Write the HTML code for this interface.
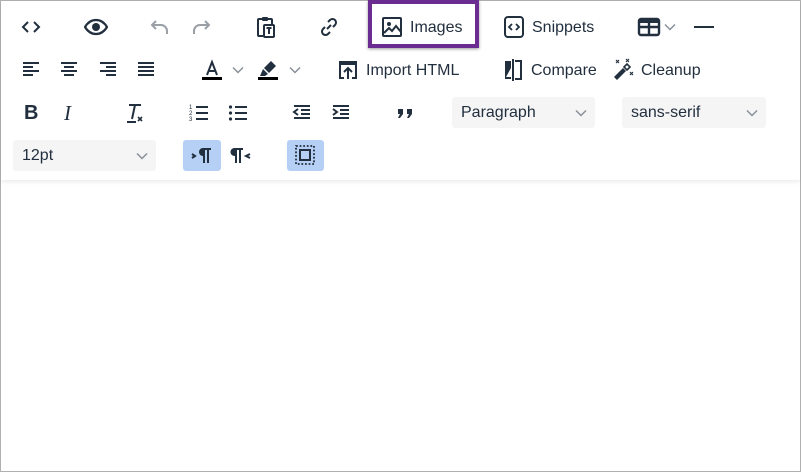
<!DOCTYPE html>
<html><head><meta charset="utf-8"><style>
*{margin:0;padding:0;box-sizing:border-box}
body{width:801px;height:472px;overflow:hidden;background:#fff;font-family:"Liberation Sans",sans-serif;color:#222f3e}
.frame{position:absolute;left:0;top:0;width:801px;height:472px;border:1px solid #b0b0b0}
.tb{position:absolute;left:1px;top:1px;width:799px;height:179px;background:#fff;box-shadow:0 2px 4px rgba(0,0,0,.08)}
.i{position:absolute;width:24px;height:24px}
.t{position:absolute;font-size:16px;line-height:18px;white-space:nowrap}
.sel{position:absolute;background:#f5f5f5;border-radius:3px;font-size:16px;padding-left:9px;line-height:32px}
.sel svg{position:absolute;right:8px;top:12px}
.on{position:absolute;background:#b6d0f5;border-radius:3px}
.box{position:absolute;left:368px;top:0;width:111px;height:48px;border:4px solid #6a2c91;box-shadow:0 1px 3px rgba(0,0,0,.4)}
</style></head><body>
<div class="frame"></div>
<div class="tb"></div>
<svg width="0" height="0" style="position:absolute"><defs>
<symbol id="chev" viewBox="0 0 12 8"><path d="M1 1.5l5 5 5-5" fill="none" stroke="#8a9099" stroke-width="1.5"/></symbol>
</defs></svg>

<!-- row 1 -->
<svg class="i" style="left:19px;top:15px" viewBox="0 0 24 24"><path d="M9 7l-5 5 5 5M15 7l5 5-5 5" fill="none" stroke="#222f3e" stroke-width="2"/></svg>
<svg class="i" style="left:84px;top:15px" viewBox="0 0 24 24"><path d="M1 12c3-5 7-7 11-7s8 2 11 7c-3 5-7 7-11 7S4 17 1 12z" fill="none" stroke="#222f3e" stroke-width="2.2"/><circle cx="12" cy="12" r="4" fill="#222f3e"/></svg>
<svg class="i" style="left:148px;top:15px" viewBox="0 0 24 24"><path d="M8 6l-4 4 4 4M4 10h9a6 6 0 016 6v3" fill="none" stroke="#9aa0a6" stroke-width="2"/></svg>
<svg class="i" style="left:189px;top:15px" viewBox="0 0 24 24"><path d="M16 6l4 4-4 4M20 10h-9a6 6 0 00-6 6v3" fill="none" stroke="#9aa0a6" stroke-width="2"/></svg>
<svg class="i" style="left:253px;top:15px" viewBox="0 0 24 24"><path d="M9 4H6a1 1 0 00-1 1v15a1 1 0 001 1h4M15 4h3a1 1 0 011 1v4" fill="none" stroke="#222f3e" stroke-width="2"/><rect x="9" y="2" width="6" height="4" rx="1" fill="#222f3e"/><rect x="11" y="10" width="10" height="12" rx="1" fill="none" stroke="#222f3e" stroke-width="2"/><path d="M13.5 13h5M16 13v6" stroke="#222f3e" stroke-width="2"/></svg>
<svg class="i" style="left:317px;top:15px" viewBox="0 0 24 24"><path d="M10 14l4-4M11 7l2-2a3.5 3.5 0 015 5l-2 2M13 17l-2 2a3.5 3.5 0 01-5-5l2-2" fill="none" stroke="#222f3e" stroke-width="2"/></svg>
<div class="box"></div>
<svg class="i" style="left:380px;top:15px" viewBox="0 0 24 24"><rect x="3" y="3" width="18" height="18" rx="1" fill="none" stroke="#222f3e" stroke-width="2"/><circle cx="9" cy="9" r="2" fill="#222f3e"/><path d="M4 18l5-5 3 3 4-5 5 6" fill="none" stroke="#222f3e" stroke-width="2"/></svg>
<div class="t" style="left:410px;top:19px">Images</div>
<svg class="i" style="left:502px;top:15px" viewBox="0 0 24 24"><rect x="3" y="2" width="18" height="20" rx="3" fill="none" stroke="#222f3e" stroke-width="2"/><path d="M10 9l-3 3 3 3M14 9l3 3-3 3" fill="none" stroke="#222f3e" stroke-width="1.8"/></svg>
<div class="t" style="left:532px;top:19px">Snippets</div>
<svg class="i" style="left:637px;top:15px" viewBox="0 0 24 24"><rect x="2" y="4" width="20" height="16" rx="2" fill="none" stroke="#222f3e" stroke-width="2.4"/><path d="M2 12h20M12 4v16" stroke="#222f3e" stroke-width="2.4"/><path d="M2 5h20v3H2z" fill="#222f3e"/></svg>
<svg style="position:absolute;left:664px;top:23px" width="12" height="8"><use href="#chev"/></svg>
<div style="position:absolute;left:694px;top:26px;width:20px;height:2px;background:#222f3e"></div>

<!-- row 2 -->
<svg class="i" style="left:19px;top:58px" viewBox="0 0 24 24"><path d="M4 5h16M4 9h10M4 13h16M4 17h10" stroke="#222f3e" stroke-width="2"/></svg>
<svg class="i" style="left:57px;top:58px" viewBox="0 0 24 24"><path d="M4 5h16M7 9h10M4 13h16M7 17h10" stroke="#222f3e" stroke-width="2"/></svg>
<svg class="i" style="left:96px;top:58px" viewBox="0 0 24 24"><path d="M4 5h16M10 9h10M4 13h16M10 17h10" stroke="#222f3e" stroke-width="2"/></svg>
<svg class="i" style="left:134px;top:58px" viewBox="0 0 24 24"><path d="M4 5h16M4 9h16M4 13h16M4 17h16" stroke="#222f3e" stroke-width="2"/></svg>
<svg class="i" style="left:200px;top:58px" viewBox="0 0 24 24"><path d="M7 17l5-13 5 13M9 13h6" fill="none" stroke="#222f3e" stroke-width="2"/><rect x="2" y="19" width="20" height="3" fill="#000"/></svg>
<svg style="position:absolute;left:232px;top:66px" width="12" height="8"><use href="#chev"/></svg>
<svg class="i" style="left:256px;top:58px" viewBox="0 0 24 24"><path d="M15 3l5 5-7 7-5-5z" fill="#222f3e"/><path d="M7 11l5 5-3 2H4z" fill="#222f3e"/><rect x="2" y="19" width="20" height="3" fill="#000"/></svg>
<svg style="position:absolute;left:289px;top:66px" width="12" height="8"><use href="#chev"/></svg>
<svg class="i" style="left:336px;top:58px" viewBox="0 0 24 24"><path d="M8 20H4V4h16v16h-4" fill="none" stroke="#222f3e" stroke-width="2"/><path d="M4 4h16v3H4z" fill="#222f3e"/><path d="M12 21v-10M8 14l4-4 4 4" fill="none" stroke="#222f3e" stroke-width="2"/></svg>
<div class="t" style="left:366px;top:62px">Import HTML</div>
<svg class="i" style="left:501px;top:58px" viewBox="0 0 24 24"><path d="M10 3H4v18h6z" fill="#222f3e"/><path d="M12 1v22" stroke="#222f3e" stroke-width="2"/><path d="M14 3h6v18h-6" fill="none" stroke="#222f3e" stroke-width="2"/><path d="M10 10l-5 9h5" fill="#fff"/></svg>
<div class="t" style="left:531px;top:62px">Compare</div>
<svg class="i" style="left:611px;top:58px" viewBox="0 0 24 24"><path d="M3 19l9-9 3 3-9 9z" fill="#222f3e"/><path d="M13 9l3-3 3 3-3 3z" fill="none" stroke="#222f3e" stroke-width="1.6"/><path d="M5 2l3 3M8 2L5 5M15 1l3 3M18 1l-3 3M19 14l3 3M22 14l-3 3" stroke="#222f3e" stroke-width="1.2"/></svg>
<div class="t" style="left:641px;top:62px">Cleanup</div>

<!-- row 3 -->
<div class="t" style="left:24px;top:104px;font-size:20px;font-weight:bold">B</div>
<div class="t" style="left:64px;top:104px;font-size:21px;font-style:italic;font-family:'Liberation Serif',serif">I</div>
<svg class="i" style="left:122px;top:101px" viewBox="0 0 24 24"><path d="M7 4h12M13 4l-3 14" stroke="#222f3e" stroke-width="2"/><path d="M5 21h9" stroke="#222f3e" stroke-width="2"/><path d="M16 16l4 4M20 16l-4 4" stroke="#222f3e" stroke-width="1.6"/></svg>
<svg class="i" style="left:187px;top:101px" viewBox="0 0 24 24"><path d="M9 6h12M9 12h12M9 18h12" stroke="#222f3e" stroke-width="2"/><text x="2" y="8" font-size="6" fill="#222f3e" font-family="Liberation Sans">1</text><text x="2" y="14" font-size="6" fill="#222f3e" font-family="Liberation Sans">2</text><text x="2" y="20" font-size="6" fill="#222f3e" font-family="Liberation Sans">3</text></svg>
<svg class="i" style="left:226px;top:101px" viewBox="0 0 24 24"><path d="M9 6h12M9 12h12M9 18h12" stroke="#222f3e" stroke-width="2"/><circle cx="4.5" cy="6" r="1.6" fill="#222f3e"/><circle cx="4.5" cy="12" r="1.6" fill="#222f3e"/><circle cx="4.5" cy="18" r="1.6" fill="#222f3e"/></svg>
<svg class="i" style="left:290px;top:101px" viewBox="0 0 24 24"><path d="M4 5h16M11 9h9M11 13h9M4 17h16" stroke="#222f3e" stroke-width="2"/><path d="M8 8l-4 3 4 3" fill="none" stroke="#222f3e" stroke-width="2"/></svg>
<svg class="i" style="left:329px;top:101px" viewBox="0 0 24 24"><path d="M4 5h16M11 9h9M11 13h9M4 17h16" stroke="#222f3e" stroke-width="2"/><path d="M4 8l4 3-4 3" fill="none" stroke="#222f3e" stroke-width="2"/></svg>
<svg class="i" style="left:393px;top:101px" viewBox="0 0 24 24"><path d="M5 8h5v5l-3 4H5l2-4H5zM14 8h5v5l-3 4h-2l2-4h-2z" fill="#222f3e"/></svg>
<div class="sel" style="left:452px;top:97px;width:143px;height:31px">Paragraph<svg width="12" height="8"><use href="#chev"/></svg></div>
<div class="sel" style="left:622px;top:97px;width:144px;height:31px">sans-serif<svg width="12" height="8"><use href="#chev"/></svg></div>

<!-- row 4 -->
<div class="sel" style="left:13px;top:140px;width:143px;height:31px">12pt<svg width="12" height="8"><use href="#chev"/></svg></div>
<div class="on" style="left:183px;top:140px;width:38px;height:31px"></div>
<svg class="i" style="left:190px;top:143px" viewBox="0 0 24 24"><path d="M2 11l3 2-3 2" fill="none" stroke="#222f3e" stroke-width="2"/><path d="M12 5h9v2h-2v13h-2V7h-2v13h-2v-7a4 4 0 010-8z" fill="#222f3e"/></svg>
<svg class="i" style="left:229px;top:143px" viewBox="0 0 24 24"><path d="M5 5h9v2h-2v13h-2V7H8v13H6v-7a4 4 0 01-1-8z" fill="#222f3e"/><path d="M21 11l-4 2 4 2" fill="none" stroke="#222f3e" stroke-width="2"/></svg>
<div class="on" style="left:287px;top:140px;width:37px;height:31px"></div>
<svg class="i" style="left:293px;top:143px" viewBox="0 0 24 24"><rect x="3" y="3" width="18" height="18" fill="none" stroke="#222f3e" stroke-width="1.8" stroke-dasharray="1.8 1.8"/><rect x="7" y="7" width="10" height="10" fill="none" stroke="#222f3e" stroke-width="2"/></svg>
</body></html>
